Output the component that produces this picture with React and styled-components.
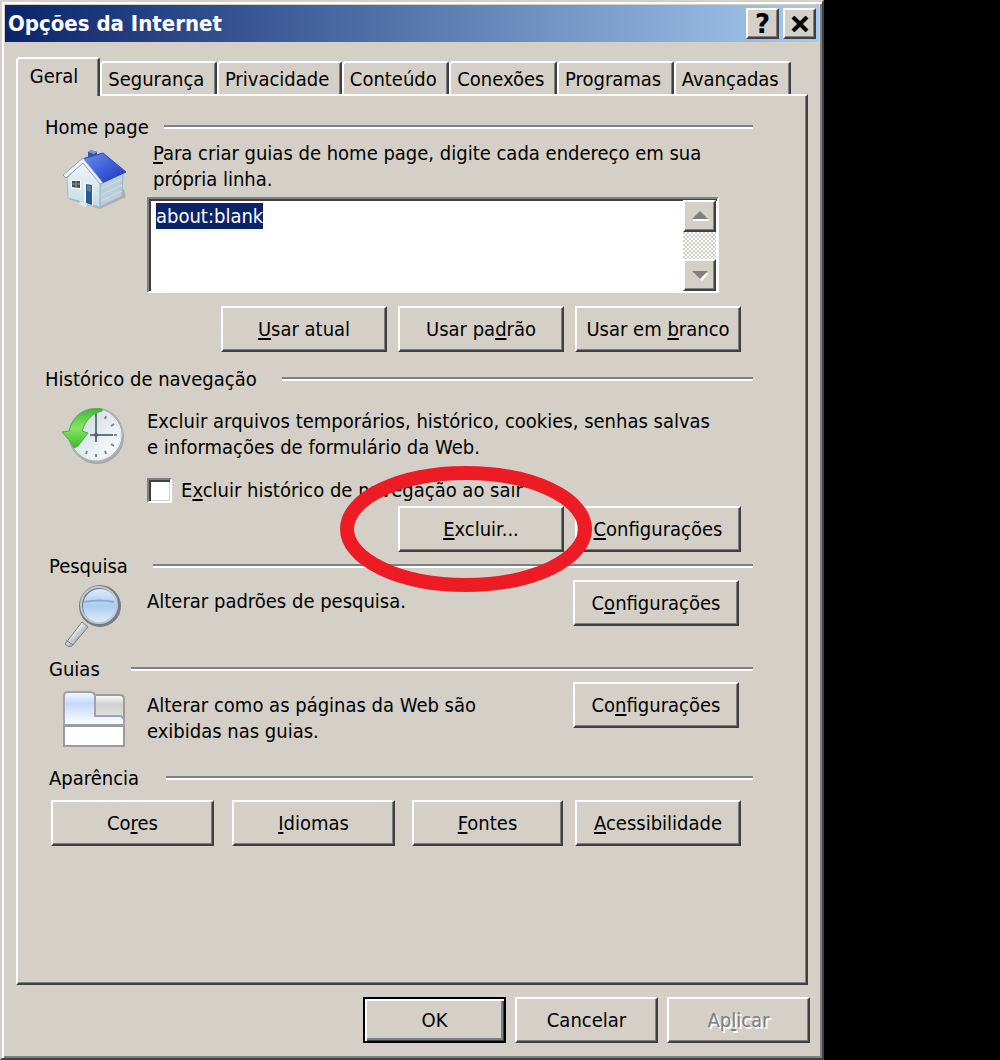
import React, { useEffect, useRef, useState } from "react";
import styled, { createGlobalStyle } from "styled-components";

const face = "#d4d0c8";
const dark = "#404040";
const shade = "#808080";

const GlobalStyle = createGlobalStyle`
  *, *::before, *::after { box-sizing: border-box; }
  body { margin: 0; background: #000; }
  body, button, textarea {
    font-family: Tahoma, "DejaVu Sans Condensed", "DejaVu Sans", sans-serif;
    font-size: 20px;
    line-height: 26px;
    color: #000;
  }
  u { text-decoration-thickness: 2px; text-underline-offset: 2px; text-decoration-skip-ink: none; }
`;

const Desktop = styled.div`
  display: grid;
  grid-template-columns: minmax(0, 1fr) 176px;
  min-height: 100vh;
`;

const Dialog = styled.main`
  display: flex;
  flex-direction: column;
  padding: 3px;
  background: ${face};
  border: 2px solid;
  border-color: ${face} ${dark} ${dark} ${face};
  box-shadow: inset 2px 2px #fff, inset -2px -2px ${shade};
`;

const TitleBar = styled.header`
  display: flex;
  align-items: center;
  gap: 4px;
  height: 37px;
  padding: 0 3px;
  background: linear-gradient(to right, #0a246a, #a6caf0);
`;

const Title = styled.h1`
  flex: 1;
  margin: 0;
  font-size: 22px;
  line-height: 26px;
  font-weight: bold;
  color: #fff;
`;

const Raised = styled.button`
  display: flex;
  align-items: center;
  justify-content: center;
  padding: 0;
  white-space: nowrap;
  background: ${face};
  border: 2px solid;
  border-color: #fff ${dark} ${dark} #fff;
  border-radius: 0;
  box-shadow: inset -1px -1px ${shade};
`;

const CaptionButton = styled(Raised)`
  width: 33px;
  height: 31px;
  font-family: "DejaVu Sans", sans-serif;
  font-size: 26px;
  font-weight: bold;
`;

const Button = styled(Raised)`
  width: ${(p) => p.$width || 166}px;
  height: 46px;
  ${(p) => p.$primary && `
    border-color: #000;
    box-shadow: inset 2px 2px #fff, inset -1px -1px ${dark}, inset -3px -3px ${shade};
  `}
  &:disabled { color: ${shade}; text-shadow: 2px 2px #fff; }
`;

const Tabs = styled.div`
  display: flex;
  align-items: flex-end;
  margin: 15px 28px 0 11px;
`;

const Tab = styled.button`
  flex: ${(p) => (p.$selected ? "0 0 84px" : "1 1 auto")};
  height: ${(p) => (p.$selected ? 39 : 33)}px;
  margin-bottom: ${(p) => (p.$selected ? "-2px" : "0")};
  padding: ${(p) => (p.$selected ? "0 8px 3px 0" : "0 4px 0 0")};
  position: relative;
  z-index: ${(p) => (p.$selected ? 1 : 0)};
  background: ${face};
  border: solid;
  border-width: 2px 2px 0 2px;
  border-color: #fff ${dark} #fff #fff;
  border-radius: 4px 3px 0 0;
  box-shadow: inset -1px 0 ${shade};
`;

const Panel = styled.div`
  flex: 1;
  margin: 0 11px;
  padding: 18px 53px 18px 27px;
  border: 2px solid;
  border-color: #fff ${dark} ${dark} #fff;
  box-shadow: inset -1px -1px ${shade};
`;

const Section = styled.section`
  min-height: ${(p) => p.$height}px;
`;

const Legend = styled.h2`
  display: flex;
  align-items: center;
  margin: 0;
  padding-left: ${(p) => (p.$indent ? 4 : 0)}px;
  font: inherit;
  &::after {
    content: "";
    flex: 1;
    height: 4px;
    border-top: 2px solid ${shade};
    border-bottom: 2px solid #fff;
  }
`;

const LegendText = styled.span`
  width: ${(p) => p.$width}px;
  white-space: nowrap;
`;

const Body = styled.div`
  display: grid;
  grid-template-columns: 102px minmax(0, 1fr);
  padding-top: ${(p) => p.$top || 0}px;
`;

const IconCell = styled.div`
  padding: ${(p) => p.$top || 0}px 0 0 17px;
  svg { display: block; }
`;

const FieldLabel = styled.label`
  display: block;
  padding: 0 30px 0 6px;
`;

const Text = styled.p`
  margin: 0;
  padding-right: 30px;
`;

const SettingRow = styled.div`
  display: flex;
  justify-content: space-between;
  align-items: flex-start;
  padding-right: 14px;
`;

const SettingText = styled.p`
  max-width: 380px;
  margin: ${(p) => p.$top}px 0 0;
`;

const Editor = styled.div`
  display: flex;
  height: 96px;
  margin: 5px 34px 0 0;
  padding: 1px 1px 0 1px;
  background: #fff;
  border: 2px solid;
  border-color: ${shade} #fff #fff ${shade};
  box-shadow: inset 2px 2px ${dark};
`;

const Addresses = styled.textarea`
  flex: 1;
  min-width: 0;
  padding: 3px 6px;
  border: 0;
  outline: 0;
  resize: none;
  overflow: hidden;
  background: transparent;
  caret-color: transparent;
  &::selection { color: #fff; background: #0a246a; }
`;

const ScrollBar = styled.div`
  display: flex;
  flex-direction: column;
  justify-content: space-between;
  width: 33px;
  background: repeating-conic-gradient(#fff 0 25%, ${face} 0 50%) 0 0 / 4px 4px;
`;

const ScrollButton = styled(Raised)`
  width: 33px;
  height: 32px;
`;

const ButtonRow = styled.div`
  display: flex;
  justify-content: flex-end;
  gap: 11px;
  padding: ${(p) => p.$top}px 12px 0 0;
`;

const CheckRow = styled.label`
  display: flex;
  align-items: center;
  gap: 9px;
  margin-top: 17px;
`;

const Check = styled.input`
  appearance: none;
  width: 25px;
  height: 25px;
  margin: 0;
  background: #fff;
  border: 2px solid;
  border-color: ${shade} #fff #fff ${shade};
  box-shadow: inset 2px 2px ${dark}, inset -1px -1px ${face};
  &:checked { background: #fff radial-gradient(#000 5px, transparent 6px); }
`;

const Marked = styled.div`
  position: relative;
`;

const Ring = styled.svg`
  position: absolute;
  left: -58px;
  top: -40px;
  z-index: 2;
  pointer-events: none;
`;

const Appearance = styled.div`
  display: flex;
  justify-content: space-between;
  padding: 9px 12px 0 6px;
`;

const Pair = styled.div`
  display: flex;
  gap: ${(p) => p.$gap}px;
`;

const Footer = styled.footer`
  display: flex;
  justify-content: flex-end;
  gap: 9px;
  padding: 12px 9px;
`;

const HouseIcon = () => (
  <svg width="68" height="62" viewBox="0 0 68 62" aria-hidden="true">
    <defs>
      <linearGradient id="roof" x1="0" y1="0" x2="1" y2="1">
        <stop offset="0" stopColor="#6f8fe8" /><stop offset=".5" stopColor="#3f60dc" /><stop offset="1" stopColor="#1f35b8" />
      </linearGradient>
      <linearGradient id="wall" x1="0" y1="0" x2="0" y2="1">
        <stop offset="0" stopColor="#f0f7fa" /><stop offset="1" stopColor="#c3dce6" />
      </linearGradient>
    </defs>
    <path d="M6 50 L38 60 L64 48 L62 40 Z" fill="#8d8f8c" opacity=".5" />
    <path d="M26 3 L29 1 L35 3 V11 L26 10Z" fill="#3552a8" />
    <path d="M26 3 L29 1 L35 3 L32 5Z" fill="#7d98d8" />
    <path d="M5 29 L22 12 L39 33 L38 58 L6 49Z" fill="url(#wall)" stroke="#a5bac5" />
    <path d="M38 33 L61 23 L60 47 L38 58Z" fill="#b9d0da" stroke="#9bb2be" />
    <path d="M39 40 L60 30 M39 46 L60 36 M39 52 L60 42" stroke="#cfe0e7" />
    <path d="M20 10 L41 4 L64 23 L40 34Z" fill="url(#roof)" stroke="#2e46a8" />
    <path d="M1 26 L21 9 L41 34 L38 35 L21 14 L4 29Z" fill="#e9f2fa" stroke="#94a3bf" />
    <path d="M9 31 H19 V41 L9 39Z" fill="#f5f7f5" />
    <path d="M10 32 H18 V39 L10 38Z" fill="#454c50" />
    <path d="M14 32 V39 M10 35 H18" stroke="#8c999a" />
    <path d="M22 33 L31 35 V57 L22 54Z" fill="#eff5f5" />
    <path d="M24 35 L30 36 V56 L24 54Z" fill="#245b94" />
    <path d="M25 36 L29 37 V43 L25 42Z" fill="#5f7c92" />
    <path d="M18 52 L25 55 L24 58 L17 55Z" fill="#e2ecec" />
  </svg>
);

const HistoryIcon = () => (
  <svg width="66" height="60" viewBox="0 0 66 60" aria-hidden="true">
    <defs>
      <linearGradient id="dial" x1="0" y1="0" x2="1" y2="1">
        <stop offset="0" stopColor="#c0cbd1" /><stop offset=".5" stopColor="#e4ecf1" /><stop offset="1" stopColor="#fff" />
      </linearGradient>
      <linearGradient id="arrow" x1="0" y1="0" x2="0" y2="1">
        <stop offset="0" stopColor="#45b838" /><stop offset=".5" stopColor="#84e664" /><stop offset="1" stopColor="#3bb82d" />
      </linearGradient>
    </defs>
    <circle cx="35" cy="29" r="27" fill="#777c7f" opacity=".5" />
    <circle cx="34" cy="27" r="26" fill="url(#dial)" stroke="#a9b1b5" strokeWidth="3" />
    <circle cx="34" cy="27" r="25" fill="none" stroke="#f9fbfb" />
    <path d="M44 8l-1 3M52 16l-3 2M55 27h-3M52 38l-3-2M44 46l-1-3M34 49v-3M24 46l1-3" stroke="#7d878d" strokeWidth="2" />
    <path d="M34 5v29M28 27h23" fill="none" stroke="#65767f" strokeWidth="2" />
    <circle cx="34" cy="27" r="2" fill="#52636e" />
    <path d="M40 1 C24 -1 11 7 7 23 L0 24 Q7 31 12 40 L16 38 L26 25 L20 23 C24 11 31 5 40 3Z" fill="url(#arrow)" stroke="#4aae3e" strokeLinejoin="round" />
  </svg>
);

const SearchIcon = () => (
  <svg width="66" height="66" viewBox="0 0 66 66" aria-hidden="true">
    <defs>
      <linearGradient id="lens" x1="0" y1="0" x2="0" y2="1">
        <stop offset="0" stopColor="#e0effd" /><stop offset=".4" stopColor="#b6d3f2" /><stop offset=".5" stopColor="#adcdf0" /><stop offset="1" stopColor="#e4f2fd" />
      </linearGradient>
      <linearGradient id="handle" x1="0" y1="0" x2="1" y2="1">
        <stop offset="0" stopColor="#777" /><stop offset=".4" stopColor="#e8e8e8" /><stop offset="1" stopColor="#5c6064" />
      </linearGradient>
    </defs>
    <path d="M20 38 L26 43 L10 62 Q6 64 3 60Z" fill="url(#handle)" stroke="#777b80" />
    <path d="M4 56 L11 61" stroke="#858585" />
    <circle cx="38" cy="22" r="19" fill="url(#lens)" stroke="#747c84" strokeWidth="4" />
    <circle cx="37" cy="21" r="18" fill="none" stroke="#bec9d1" strokeWidth="2" />
    <path d="M22 18 Q37 15 52 18" fill="none" stroke="#8cabd1" strokeWidth="2" />
  </svg>
);

const TabsIcon = () => (
  <svg width="66" height="60" viewBox="0 0 66 60" aria-hidden="true">
    <defs>
      <linearGradient id="page" x1="0" y1="0" x2="0" y2="1">
        <stop offset="0" stopColor="#f7faff" /><stop offset=".35" stopColor="#c4d8fc" /><stop offset="1" stopColor="#fff" />
      </linearGradient>
      <linearGradient id="back" x1="0" y1="0" x2="0" y2="1">
        <stop offset="0" stopColor="#fff" /><stop offset=".3" stopColor="#d0d0d0" /><stop offset="1" stopColor="#ededed" />
      </linearGradient>
    </defs>
    <path d="M32 5 H58 Q62 5 62 9 V36 H32Z" fill="url(#back)" stroke="#9b9b9b" strokeWidth="2" />
    <path d="M2 35 V6 Q2 2 6 2 H28 Q33 2 33 7 V26 H59 L62 29 V35Z" fill="url(#page)" stroke="#a0a3a8" strokeWidth="2" />
    <path d="M2 36 H62 V56 H2Z" fill="#fff" stroke="#9a9a9a" strokeWidth="2" />
  </svg>
);

const Arrow = ({ down }) => (
  <svg width="18" height="12" viewBox="0 0 18 12" aria-hidden="true">
    <path d={down ? "M3 4 H18 L11 12Z" : "M2 9 H18 V11 H2Z"} fill="#fff" />
    <path d={down ? "M1 2 H17 L9 10Z" : "M1 9 H17 L9 1Z"} fill={shade} />
  </svg>
);

const tabNames = ["Geral", "Segurança", "Privacidade", "Conteúdo", "Conexões", "Programas", "Avançadas"];

export default function App() {
  const addresses = useRef(null);
  const [clearOnExit, setClearOnExit] = useState(false);

  useEffect(() => {
    addresses.current.focus();
    addresses.current.select();
  }, []);

  return (
    <>
      <GlobalStyle />
      <Desktop>
        <Dialog>
          <TitleBar>
            <Title>Opções da Internet</Title>
            <CaptionButton type="button" aria-label="Ajuda">?</CaptionButton>
            <CaptionButton type="button" aria-label="Fechar">
              <svg width="18" height="16" viewBox="0 0 18 16" aria-hidden="true">
                <path d="M2 1 L16 15 M16 1 L2 15" stroke="#000" strokeWidth="4" />
              </svg>
            </CaptionButton>
          </TitleBar>

          <Tabs role="tablist">
            {tabNames.map((name, i) => (
              <Tab key={name} type="button" role="tab" aria-selected={i === 0} $selected={i === 0}>{name}</Tab>
            ))}
          </Tabs>

          <Panel role="tabpanel">
            <Section $height={252}>
              <Legend><LegendText $width={119}>Home page</LegendText></Legend>
              <Body>
                <IconCell $top={9}><HouseIcon /></IconCell>
                <div>
                  <FieldLabel htmlFor="addresses">
                    <u>P</u>ara criar guias de home page, digite cada endereço em sua própria linha.
                  </FieldLabel>
                  <Editor>
                    <Addresses id="addresses" ref={addresses} defaultValue="about:blank" spellCheck={false} />
                    <ScrollBar>
                      <ScrollButton type="button" aria-label="Rolar para cima"><Arrow /></ScrollButton>
                      <ScrollButton type="button" aria-label="Rolar para baixo"><Arrow down /></ScrollButton>
                    </ScrollBar>
                  </Editor>
                </div>
              </Body>
              <ButtonRow $top={13}>
                <Button type="button"><span><u>U</u>sar atual</span></Button>
                <Button type="button"><span>Usar pa<u>d</u>rão</span></Button>
                <Button type="button"><span>Usar em <u>b</u>ranco</span></Button>
              </ButtonRow>
            </Section>

            <Section $height={187}>
              <Legend><LegendText $width={237}>Histórico de navegação</LegendText></Legend>
              <Body $top={16}>
                <IconCell><HistoryIcon /></IconCell>
                <div>
                  <Text>Excluir arquivos temporários, histórico, cookies, senhas salvas e informações de formulário da Web.</Text>
                  <CheckRow>
                    <Check type="checkbox" checked={clearOnExit} onChange={(e) => setClearOnExit(e.target.checked)} />
                    <span>E<u>x</u>cluir histórico de navegação ao sair</span>
                  </CheckRow>
                </div>
              </Body>
              <ButtonRow $top={3}>
                <Marked>
                  <Button type="button"><span><u>E</u>xcluir...</span></Button>
                  <Ring width="252" height="126" viewBox="0 0 252 126" aria-hidden="true">
                    <ellipse cx="126" cy="63" rx="119" ry="56" fill="none" stroke="#ed1c24" strokeWidth="14" />
                  </Ring>
                </Marked>
                <Button type="button"><span><u>C</u>onfigurações</span></Button>
              </ButtonRow>
            </Section>

            <Section $height={103}>
              <Legend $indent><LegendText $width={104}>Pesquisa</LegendText></Legend>
              <Body $top={1}>
                <IconCell $top={4}><SearchIcon /></IconCell>
                <SettingRow>
                  <SettingText $top={8}>Alterar padrões de pesquisa.</SettingText>
                  <Button type="button"><span>C<u>o</u>nfigurações</span></Button>
                </SettingRow>
              </Body>
            </Section>

            <Section $height={109}>
              <Legend $indent><LegendText $width={82}>Guias</LegendText></Legend>
              <Body>
                <IconCell $top={8}><TabsIcon /></IconCell>
                <SettingRow>
                  <SettingText $top={10}>Alterar como as páginas da Web são exibidas nas guias.</SettingText>
                  <Button type="button"><span>Co<u>n</u>figurações</span></Button>
                </SettingRow>
              </Body>
            </Section>

            <Section>
              <Legend $indent><LegendText $width={117}>Aparência</LegendText></Legend>
              <Appearance>
                <Pair $gap={18}>
                  <Button type="button" $width={163}><span>Co<u>r</u>es</span></Button>
                  <Button type="button" $width={163}><span><u>I</u>diomas</span></Button>
                </Pair>
                <Pair $gap={12}>
                  <Button type="button" $width={151}><span><u>F</u>ontes</span></Button>
                  <Button type="button"><span><u>A</u>cessibilidade</span></Button>
                </Pair>
              </Appearance>
            </Section>
          </Panel>

          <Footer>
            <Button type="button" $width={143} $primary>OK</Button>
            <Button type="button" $width={143}>Cancelar</Button>
            <Button type="button" $width={143} disabled><span>Ap<u>l</u>icar</span></Button>
          </Footer>
        </Dialog>
      </Desktop>
    </>
  );
}
